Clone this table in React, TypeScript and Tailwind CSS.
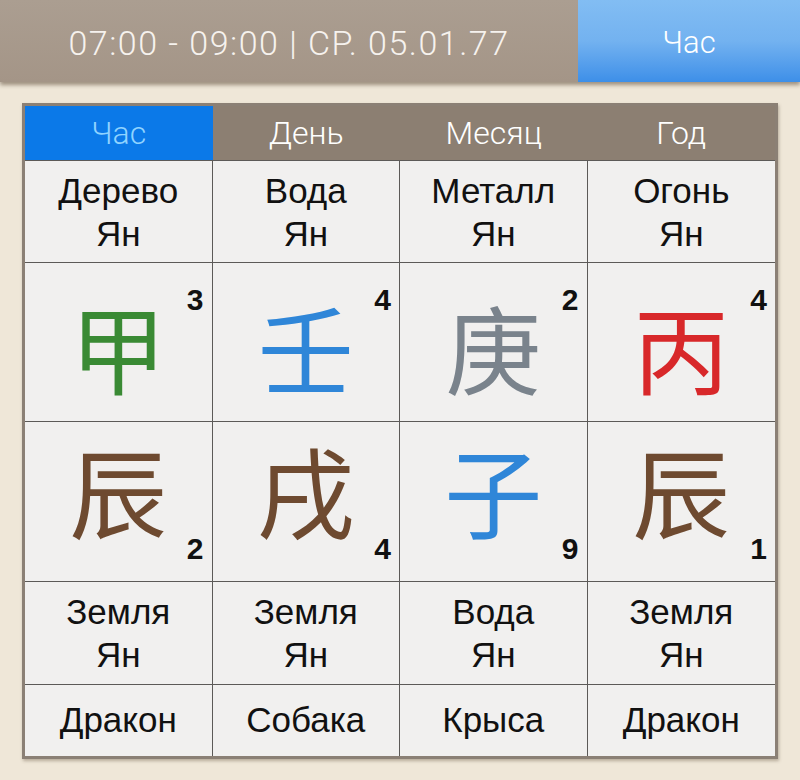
import React from 'react';

type Pillar = {
  label: string;
  stemEl: string;
  stemYin: string;
  stem: string;
  stemColor: string;
  stemNum: number;
  branch: string;
  branchColor: string;
  branchNum: number;
  branchEl: string;
  branchYin: string;
  animal: string;
};

const pillars: Pillar[] = [
  { label: 'Час', stemEl: 'Дерево', stemYin: 'Ян', stem: '甲', stemColor: 'text-[#3a8a34]', stemNum: 3, branch: '辰', branchColor: 'text-[#6e4a30]', branchNum: 2, branchEl: 'Земля', branchYin: 'Ян', animal: 'Дракон' },
  { label: 'День', stemEl: 'Вода', stemYin: 'Ян', stem: '壬', stemColor: 'text-[#2f86d8]', stemNum: 4, branch: '戌', branchColor: 'text-[#6e4a30]', branchNum: 4, branchEl: 'Земля', branchYin: 'Ян', animal: 'Собака' },
  { label: 'Месяц', stemEl: 'Металл', stemYin: 'Ян', stem: '庚', stemColor: 'text-[#7a838c]', stemNum: 2, branch: '子', branchColor: 'text-[#2f86d8]', branchNum: 9, branchEl: 'Вода', branchYin: 'Ян', animal: 'Крыса' },
  { label: 'Год', stemEl: 'Огонь', stemYin: 'Ян', stem: '丙', stemColor: 'text-[#d8282a]', stemNum: 4, branch: '辰', branchColor: 'text-[#6e4a30]', branchNum: 1, branchEl: 'Земля', branchYin: 'Ян', animal: 'Дракон' },
];

const sans = "font-['Liberation_Sans','Noto_Sans',sans-serif]";
const narrow = "font-['Roboto','Liberation_Sans',sans-serif]";
const cjk = "font-['Noto_Sans_CJK_SC','Noto_Sans_CJK_JP',sans-serif]";

const cell = 'bg-[#f1f0ef] border-r border-b border-[#5c5a58]';

export default function App() {
  return (
    <div className="w-[800px] h-[780px] bg-[#efe7d8] overflow-hidden">
      {/* Top bar */}
      <div className="flex h-[82px] shadow-[0_3px_4px_rgba(60,40,20,0.45)]">
        <div className={`w-[578px] flex items-center justify-center pt-[4px] bg-gradient-to-b from-[#ab9e91] to-[#a49587] text-[#f6f2ee] text-[34px] font-light tracking-[1.5px] ${narrow}`}>
          07:00 - 09:00 | СР. 05.01.77
        </div>
        <div className={`flex-1 flex items-center justify-center pt-[4px] bg-gradient-to-b from-[#82bdf3] via-[#73b2f0] to-[#3d8fe8] text-white text-[31px] font-light ${narrow}`}>
          Час
        </div>
      </div>

      {/* Table */}
      <div className="mx-[22px] mt-[21px] border-[3px] border-[#8b8075] shadow-[1px_2px_3px_rgba(80,60,40,0.35)]">
        <div className="grid grid-cols-4 grid-rows-[55px_102px_159px_160px_103px_71px]">
          {pillars.map((p, i) => (
            <div
              key={'h' + i}
              className={`flex items-center justify-center text-[32px] font-light ${narrow} ${i === 0 ? 'bg-[#0b79e8] text-[#8fd3ff]' : 'bg-[#8c7f72] text-white'} border-b border-[#5c5a58]`}
            >
              {p.label}
            </div>
          ))}
          {pillars.map((p, i) => (
            <div key={'se' + i} className={`${cell} ${i === 3 ? 'border-r-0' : ''} flex flex-col items-center justify-center text-[35px] leading-[43px] text-[#111] ${sans}`}>
              <span>{p.stemEl}</span>
              <span>{p.stemYin}</span>
            </div>
          ))}
          {pillars.map((p, i) => (
            <div key={'s' + i} className={`${cell} ${i === 3 ? 'border-r-0' : ''} relative flex items-center justify-center`}>
              <span className={`${cjk} ${p.stemColor} text-[96px] leading-none mt-[8px]`}>{p.stem}</span>
              <span className={`absolute top-[14px] right-[8px] text-[30px] font-bold text-[#111] ${sans}`}>{p.stemNum}</span>
            </div>
          ))}
          {pillars.map((p, i) => (
            <div key={'b' + i} className={`${cell} ${i === 3 ? 'border-r-0' : ''} relative flex items-center justify-center`}>
              <span className={`${cjk} ${p.branchColor} text-[98px] leading-none mt-[-28px]`}>{p.branch}</span>
              <span className={`absolute bottom-[10px] right-[8px] text-[30px] font-bold text-[#111] ${sans}`}>{p.branchNum}</span>
            </div>
          ))}
          {pillars.map((p, i) => (
            <div key={'be' + i} className={`${cell} ${i === 3 ? 'border-r-0' : ''} flex flex-col items-center justify-center text-[35px] leading-[43px] text-[#111] ${sans}`}>
              <span>{p.branchEl}</span>
              <span>{p.branchYin}</span>
            </div>
          ))}
          {pillars.map((p, i) => (
            <div key={'a' + i} className={`${cell} ${i === 3 ? 'border-r-0' : ''} border-b-0 flex items-center justify-center text-[35px] text-[#111] ${sans}`}>
              {p.animal}
            </div>
          ))}
        </div>
      </div>
    </div>
  );
}
